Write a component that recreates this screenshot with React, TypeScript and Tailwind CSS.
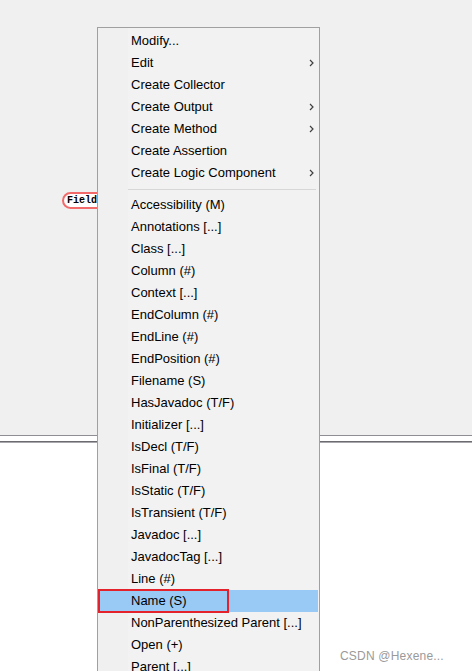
import React from 'react';

interface MenuItem {
  label: string;
  submenu?: boolean;
  separator?: boolean;
  selected?: boolean;
}

const items: MenuItem[] = [
  { label: 'Modify...' },
  { label: 'Edit', submenu: true },
  { label: 'Create Collector' },
  { label: 'Create Output', submenu: true },
  { label: 'Create Method', submenu: true },
  { label: 'Create Assertion' },
  { label: 'Create Logic Component', submenu: true },
  { label: '', separator: true },
  { label: 'Accessibility (M)' },
  { label: 'Annotations [...]' },
  { label: 'Class [...]' },
  { label: 'Column (#)' },
  { label: 'Context [...]' },
  { label: 'EndColumn (#)' },
  { label: 'EndLine (#)' },
  { label: 'EndPosition (#)' },
  { label: 'Filename (S)' },
  { label: 'HasJavadoc (T/F)' },
  { label: 'Initializer [...]' },
  { label: 'IsDecl (T/F)' },
  { label: 'IsFinal (T/F)' },
  { label: 'IsStatic (T/F)' },
  { label: 'IsTransient (T/F)' },
  { label: 'Javadoc [...]' },
  { label: 'JavadocTag [...]' },
  { label: 'Line (#)' },
  { label: 'Name (S)', selected: true },
  { label: 'NonParenthesized Parent [...]' },
  { label: 'Open (+)' },
  { label: 'Parent [...]' },
];

function Chevron() {
  return (
    <svg width="5" height="8" viewBox="0 0 5 8" className="mr-[4px]">
      <path d="M1 1 L4 4 L1 7" fill="none" stroke="#404040" strokeWidth="1.2" />
    </svg>
  );
}

export default function App() {
  return (
    <div
      className="relative w-[472px] h-[671px] overflow-hidden bg-white"
      style={{ fontFamily: '"Liberation Sans", Arial, sans-serif' }}
    >
      {/* canvas area */}
      <div className="h-[435px] bg-[#f0f0f0]" />
      <div className="h-px bg-[#8e8e94]" />
      <div className="h-[5px] bg-white" />
      <div className="h-px bg-[#6c6c70]" />
      <div className="h-px bg-[#a8a8ac]" />

      {/* node on canvas */}
      <div className="absolute left-[62px] top-[192px] h-[17px] w-[60px] rounded-full border-2 border-[#f26a6a] bg-white flex items-center pl-[3px]">
        <span
          className="text-[10px] text-black leading-none font-semibold"
          style={{ fontFamily: '"Liberation Mono", monospace' }}
        >
          Field
        </span>
      </div>

      {/* context menu */}
      <div className="absolute left-[97px] top-[27px] w-[223px] h-[700px] border border-[#a0a0a0] bg-[#f2f2f2] pt-[2px] pr-[1px]">
        <div className="absolute left-0 top-0 bottom-0 w-[30px] bg-[#f0f0f0]" />
        <div className="relative flex flex-col">
          {items.map((item, i) =>
            item.separator ? (
              <div key={i} className="h-[10px] flex items-center pl-[30px] pr-[2px]">
                <div className="h-px w-full bg-[#d7d7d7]" />
              </div>
            ) : (
              <div
                key={i}
                className={`relative h-[22px] flex items-center justify-between pl-[33px] text-[13px] text-black ${
                  item.selected ? 'bg-[#99c9f5]' : ''
                }`}
              >
                <span>{item.label}</span>
                {item.submenu && <Chevron />}
                {item.selected && (
                  <div className="absolute left-0 top-[-1px] w-[131px] h-[24px] border-2 border-[#e3222c]" />
                )}
              </div>
            )
          )}
        </div>
      </div>

      {/* watermark */}
      <div className="absolute left-[340px] top-[647px] text-[12px] text-[#9a9a9a] tracking-[0.2px]">
        CSDN @Hexene...
      </div>
    </div>
  );
}
